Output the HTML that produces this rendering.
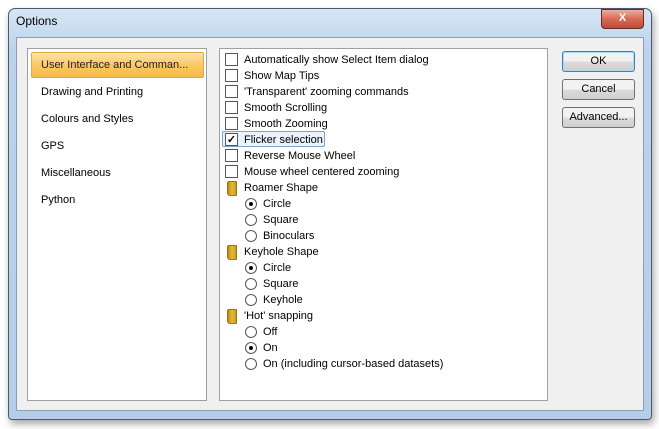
<!DOCTYPE html>
<html><head><style>
body{margin:0;width:659px;height:429px;background:#fff;position:relative;overflow:hidden;font-family:"Liberation Sans",sans-serif;font-size:11px;color:#000}
.abs{position:absolute}
.win{left:8px;top:8px;width:642px;height:410px;border:1px solid #4a5a6c;border-radius:7px 7px 4px 4px;background:linear-gradient(#d7e6f5,#bcd3ec 40px,#b5cde8);box-shadow:2px 4px 8px rgba(0,0,0,.35)}
.client{left:16px;top:37px;width:626px;height:372px;background:#f0f0f0;border:1px solid #8aa0b8}
.list{background:#fff;border:1px solid #a0a0a0}
.row{position:absolute;left:0;height:16px;line-height:16px;white-space:nowrap}
.cb{position:absolute;width:11px;height:11px;border:1px solid #555;background:#fff;top:1px}
.rd{position:absolute;width:10px;height:10px;border:1px solid #555;border-radius:50%;background:#fff;top:2px}
.rd.on::after{content:"";position:absolute;left:3px;top:3px;width:4px;height:4px;border-radius:50%;background:#000}
.bk{position:absolute;width:8px;height:13px;top:1px;background:linear-gradient(90deg,#b88a10,#e6bb40 50%,#c99a20);border-radius:2px 1px 1px 3px;border:1px solid #9a7410}
.btn{position:absolute;left:562px;width:71px;height:19px;border:1px solid #707070;border-radius:3px;background:linear-gradient(#f2f2f2 50%,#dcdcdc 50%,#cfcfcf);text-align:center;line-height:19px}
.li{position:absolute;left:41px;font-size:11px}
</style></head><body>
<div class="abs win"></div>
<div class="abs" style="left:16px;top:14px;font-size:12px;">Options</div>
<div class="abs" style="left:601px;top:9px;width:41px;height:18px;border:1px solid #6b2a1f;border-radius:0 0 4px 4px;background:linear-gradient(#eab0a2,#d66a55 50%,#c04a35);color:#fff;text-align:center;font-weight:bold;font-size:11px;line-height:17px">X</div>
<div class="abs client"></div>
<div class="abs list" style="left:27px;top:48px;width:178px;height:351px"></div>
<div class="abs" style="left:31px;top:52px;width:171px;height:24px;border:1px solid #e3a93a;border-radius:2px;background:linear-gradient(#fde3a8,#fbc866 50%,#f8b948)"></div>
<div class="li" style="top:59px;color:#222">User Interface and Comman...</div>
<div class="li" style="top:86px">Drawing and Printing</div>
<div class="li" style="top:113px">Colours and Styles</div>
<div class="li" style="top:140px">GPS</div>
<div class="li" style="top:167px">Miscellaneous</div>
<div class="li" style="top:194px">Python</div>
<div class="abs list" style="left:219px;top:48px;width:327px;height:351px"></div>
<div class="abs" style="left:222px;top:131px;width:101px;height:14px;border:1px solid #7da2ce;border-radius:2px;background:#eaf2fb"></div>
<div class="abs" style="left:225px;top:52px;width:320px;height:330px">
<div class="row" style="top:0"><span class="cb" style="left:0"></span><span style="margin-left:19px">Automatically show Select Item dialog</span></div>
<div class="row" style="top:16px"><span class="cb" style="left:0"></span><span style="margin-left:19px">Show Map Tips</span></div>
<div class="row" style="top:32px"><span class="cb" style="left:0"></span><span style="margin-left:19px">'Transparent' zooming commands</span></div>
<div class="row" style="top:48px"><span class="cb" style="left:0"></span><span style="margin-left:19px">Smooth Scrolling</span></div>
<div class="row" style="top:64px"><span class="cb" style="left:0"></span><span style="margin-left:19px">Smooth Zooming</span></div>
<div class="row" style="top:80px"><span class="cb" style="left:0;font-size:11px;line-height:12px;text-align:center;font-weight:bold">✓</span><span style="margin-left:19px">Flicker selection</span></div>
<div class="row" style="top:96px"><span class="cb" style="left:0"></span><span style="margin-left:19px">Reverse Mouse Wheel</span></div>
<div class="row" style="top:112px"><span class="cb" style="left:0"></span><span style="margin-left:19px">Mouse wheel centered zooming</span></div>
<div class="row" style="top:128px"><span class="bk" style="left:2px"></span><span style="margin-left:19px">Roamer Shape</span></div>
<div class="row" style="top:144px"><span class="rd on" style="left:20px"></span><span style="margin-left:38px">Circle</span></div>
<div class="row" style="top:160px"><span class="rd" style="left:20px"></span><span style="margin-left:38px">Square</span></div>
<div class="row" style="top:176px"><span class="rd" style="left:20px"></span><span style="margin-left:38px">Binoculars</span></div>
<div class="row" style="top:192px"><span class="bk" style="left:2px"></span><span style="margin-left:19px">Keyhole Shape</span></div>
<div class="row" style="top:208px"><span class="rd on" style="left:20px"></span><span style="margin-left:38px">Circle</span></div>
<div class="row" style="top:224px"><span class="rd" style="left:20px"></span><span style="margin-left:38px">Square</span></div>
<div class="row" style="top:240px"><span class="rd" style="left:20px"></span><span style="margin-left:38px">Keyhole</span></div>
<div class="row" style="top:256px"><span class="bk" style="left:2px"></span><span style="margin-left:19px">'Hot' snapping</span></div>
<div class="row" style="top:272px"><span class="rd" style="left:20px"></span><span style="margin-left:38px">Off</span></div>
<div class="row" style="top:288px"><span class="rd on" style="left:20px"></span><span style="margin-left:38px">On</span></div>
<div class="row" style="top:304px"><span class="rd" style="left:20px"></span><span style="margin-left:38px">On (including cursor-based datasets)</span></div>
</div>
<div class="btn" style="top:51px;border-color:#3c7fb1;box-shadow:inset 0 0 0 1px #a8dcf8">OK</div>
<div class="btn" style="top:79px">Cancel</div>
<div class="btn" style="top:107px">Advanced...</div>
</body></html>
